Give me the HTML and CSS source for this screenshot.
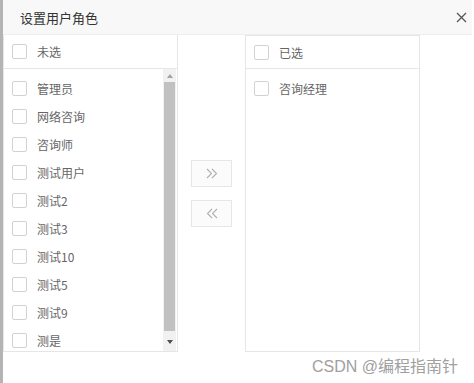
FILE: index.html
```html
<!DOCTYPE html>
<html lang="zh-CN">
<head>
  <meta charset="UTF-8" />
  <title>设置用户角色</title>
  <link rel="stylesheet" href="styles.css">
</head>
<body>
  <div class="dialog">
    <div class="dlg-title">
      <span>设置用户角色</span>
      <svg class="close" width="11" height="11" viewBox="0 0 11 11"><path d="M1 1L10 10M10 1L1 10" stroke="#555" stroke-width="1.3" fill="none"/></svg>
    </div>

    <div class="dlg-body">
      <!-- 未选 -->
      <div class="panel left">
        <div class="panel-head"><span class="cb"></span>未选</div>
        <div class="panel-list">
          <div class="items">
            <div class="item"><span class="cb"></span>管理员</div>
            <div class="item"><span class="cb"></span>网络咨询</div>
            <div class="item"><span class="cb"></span>咨询师</div>
            <div class="item"><span class="cb"></span>测试用户</div>
            <div class="item"><span class="cb"></span>测试2</div>
            <div class="item"><span class="cb"></span>测试3</div>
            <div class="item"><span class="cb"></span>测试10</div>
            <div class="item"><span class="cb"></span>测试5</div>
            <div class="item"><span class="cb"></span>测试9</div>
            <div class="item"><span class="cb"></span>测是</div>
          </div>
          <div class="sbar">
            <span class="arr up"></span>
            <span class="thumb"></span>
            <span class="arr down"></span>
          </div>
        </div>
      </div>

      <!-- buttons -->
      <div class="moves">
        <button class="mv"><svg width="12" height="11" viewBox="0 0 12 11"><path d="M1 1L5.5 5.5L1 10M6 1L10.5 5.5L6 10" stroke="#b0b0b0" stroke-width="1.1" fill="none"/></svg></button>
        <button class="mv"><svg width="12" height="11" viewBox="0 0 12 11"><path d="M6 1L1.5 5.5L6 10M11 1L6.5 5.5L11 10" stroke="#b0b0b0" stroke-width="1.1" fill="none"/></svg></button>
      </div>

      <!-- 已选 -->
      <div class="panel right">
        <div class="panel-head"><span class="cb"></span>已选</div>
        <div class="panel-list">
          <div class="items">
            <div class="item"><span class="cb"></span>咨询经理</div>
          </div>
        </div>
      </div>
    </div>

    <div class="watermark">CSDN @编程指南针</div>
  </div>
</body>
</html>
```

FILE: styles.css
```css
*,*::before,*::after{box-sizing:border-box;margin:0;padding:0;}
body{font-family:"Noto Sans CJK SC","Liberation Sans",sans-serif;background:#fff;color:#666;width:474px;height:383px;overflow:hidden;}

/* ===== dialog ===== */
.dialog{height:383px;border-left:3px solid #b4b4b4;width:472px;position:relative;}
.dlg-title{height:35px;background:#f8f8f8;border-bottom:1px solid #eee;display:flex;align-items:center;justify-content:space-between;padding:0 5px 0 17px;font-size:13px;color:#333;}
.close{display:block;}

.dlg-body{display:flex;align-items:flex-start;}

/* ===== panel ===== */
.panel{width:175px;height:317px;border:1px solid #e6e6e6;border-top:none;background:#fff;display:flex;flex-direction:column;}
.panel.right{border-top:1px solid #e6e6e6;}
.panel-head{height:34px;border-bottom:1px solid #e6e6e6;display:flex;align-items:center;padding-left:8px;font-size:12px;color:#666;}
.panel.right .panel-head{height:33px;}
.panel-list{flex:1;display:flex;overflow:hidden;}
.items{flex:1;padding-top:5px;}
.item{height:28px;display:flex;align-items:center;padding-left:8px;font-size:12px;color:#666;}
.cb{width:15px;height:15px;border:1px solid #d2d2d2;border-radius:2px;background:#fff;margin-right:10px;flex:none;}

/* scrollbar */
.sbar{width:13px;margin-right:1px;background:#f1f1f1;display:flex;flex-direction:column;align-items:center;padding:3px 0 2px;}
.thumb{flex:1;width:11px;background:#c1c1c1;margin:4px 0 9px;}
.arr{width:0;height:0;border-left:3px solid transparent;border-right:3px solid transparent;}
.arr.up{border-bottom:4px solid #a3a3a3;margin-top:2px;}
.arr.down{border-top:4px solid #505050;margin-bottom:5px;}

/* ===== move buttons ===== */
.moves{width:67px;display:flex;flex-direction:column;align-items:center;padding-top:125px;gap:13px;}
.mv{width:41px;height:27px;border:1px solid #e6e6e6;background:#fbfbfb;display:flex;align-items:center;justify-content:center;}

.watermark{position:absolute;right:14px;bottom:6px;font-size:16px;color:#a0a0a0;font-family:"Liberation Sans","Noto Sans CJK SC",sans-serif;}
```
